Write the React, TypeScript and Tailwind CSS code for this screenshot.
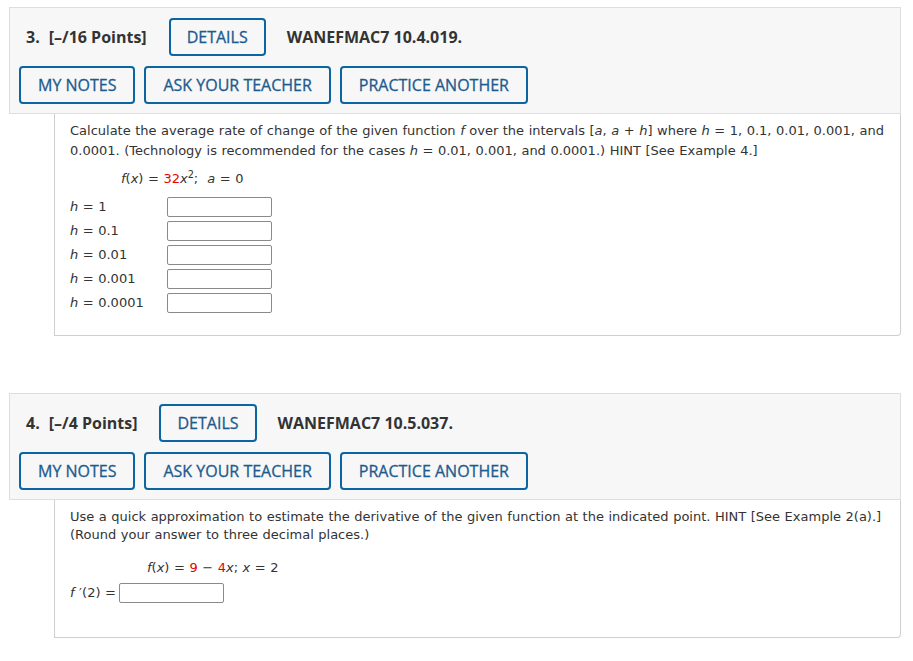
import React from 'react'

const btn =
  'h-[38px] flex items-center border-2 border-[#0b65a0] rounded-[4px] text-[16px] font-normal text-[#1d5b8f] bg-[#f7f7f7] leading-none [-webkit-text-stroke:0.3px_#1d5b8f]'

function Header({ num, points, code }: { num: string; points: string; code: string }) {
  return (
    <div className="bg-[#f7f7f7] border border-[#dedede] pl-[9px] pt-[10px] pb-[9px] font-['Open_Sans',sans-serif]">
      <div className="flex items-center pl-[7px] h-[38px] text-[16px] text-[#333]">
        <span className="font-bold">{num}</span>
        <span className="ml-[9px] font-bold">{points}</span>
        <button className={`${btn} ml-[22px] px-4`}>DETAILS</button>
        <span className="ml-[21px] font-bold">{code}</span>
      </div>
      <div className="flex gap-[9px] mt-[10px]">
        <button className={`${btn} px-[17px]`}>MY NOTES</button>
        <button className={`${btn} px-[17px]`}>ASK YOUR TEACHER</button>
        <button className={`${btn} px-[17px]`}>PRACTICE ANOTHER</button>
      </div>
    </div>
  )
}

function Box() {
  return <input type="text" className="w-[105px] h-[20px] border border-[#8a8a8a] rounded-[2px] bg-white" />
}

const hValues = ['1', '0.1', '0.01', '0.001', '0.0001']

const bodyText =
  "ml-[45px] border-x border-b border-[#cfcfcf] rounded-br-[4px] pl-[15px] font-['DejaVu_Sans',Verdana,sans-serif] text-[13px] text-[#333] [word-spacing:0.4px]"

export default function App() {
  return (
    <div className="min-h-screen bg-white pl-[9px] pt-[7px]">
      <div className="w-[892px]">
        <Header num="3." points="[–/16 Points]" code="WANEFMAC7 10.4.019." />
        <div className={`${bodyText} pt-[7px] pb-[22px]`}>
          <div className="leading-[20px] whitespace-nowrap">
            Calculate the average rate of change of the given function <i>f</i> over the intervals [<i>a</i>, <i>a</i> + <i>h</i>] where <i>h</i> = 1, 0.1, 0.01, 0.001, and
            <br />
            0.0001. (Technology is recommended for the cases <i>h</i> = 0.01, 0.001, and 0.0001.) HINT [See Example 4.]
          </div>
          <div className="mt-[8px] ml-[51px] leading-[20px] whitespace-pre">
            <i>f</i>(<i>x</i>) = <span className="text-[#e60000]">32</span><i>x</i><sup>2</sup>;  <i>a</i> = 0
          </div>
          <div className="mt-[8px] grid grid-cols-[97px_105px] gap-y-[4px] items-center">
            {hValues.map((v) => (
              <React.Fragment key={v}>
                <span className="leading-[20px]">
                  <i>h</i> = {v}
                </span>
                <Box />
              </React.Fragment>
            ))}
          </div>
        </div>

        <div className="h-[57px]" />

        <Header num="4." points="[–/4 Points]" code="WANEFMAC7 10.5.037." />
        <div className={`${bodyText} pt-[8px] pb-[34px]`}>
          <div className="leading-[18px] whitespace-nowrap">
            Use a quick approximation to estimate the derivative of the given function at the indicated point. HINT [See Example 2(a).]
            <br />
            (Round your answer to three decimal places.)
          </div>
          <div className="mt-[14px] ml-[77px] leading-[20px]">
            <i>f</i>(<i>x</i>) = <span className="text-[#e60000]">9</span> − <span className="text-[#e60000]">4</span><i>x</i>; <i>x</i> = 2
          </div>
          <div className="mt-[5px] grid grid-cols-[49px_105px] items-center">
            <span className="leading-[20px]">
              <i>f</i> ′(2) =
            </span>
            <Box />
          </div>
        </div>
      </div>
    </div>
  )
}
